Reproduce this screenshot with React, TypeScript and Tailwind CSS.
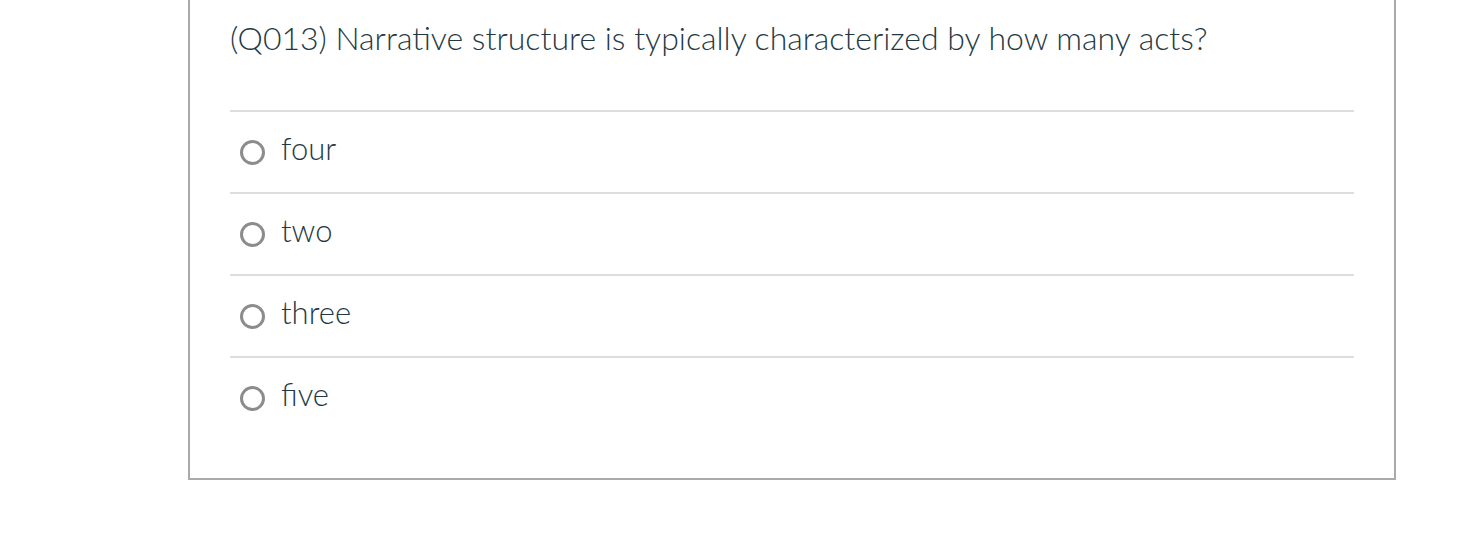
import React from "react";

const options = ["four", "two", "three", "five"];

export default function App() {
  return (
    <div className="min-h-[547px] w-full bg-white" style={{ fontFamily: "Lato, 'Noto Sans', sans-serif" }}>
      <div className="ml-[188px] w-[1208px] border-x-2 border-b-2 border-[#aaaaaa] bg-white px-[40px] pb-[40px]">
        <div className="flex h-[110px] items-start pt-[16px] text-[32px] font-light leading-[44px] text-[#1f3a44]">
          (Q013) Narrative structure is typically characterized by how many acts?
        </div>
        {options.map((o) => (
          <div key={o} className="flex h-[82px] items-center border-t-2 border-[#dddddd] pl-[10px]">
            <span className="box-border h-[25px] w-[25px] rounded-full border-[3px] border-[#8c8c8c]" />
            <span className="ml-[16px] -mt-[8px] text-[31px] font-light leading-[40px] text-[#1f3a44]">{o}</span>
          </div>
        ))}
      </div>
    </div>
  );
}
